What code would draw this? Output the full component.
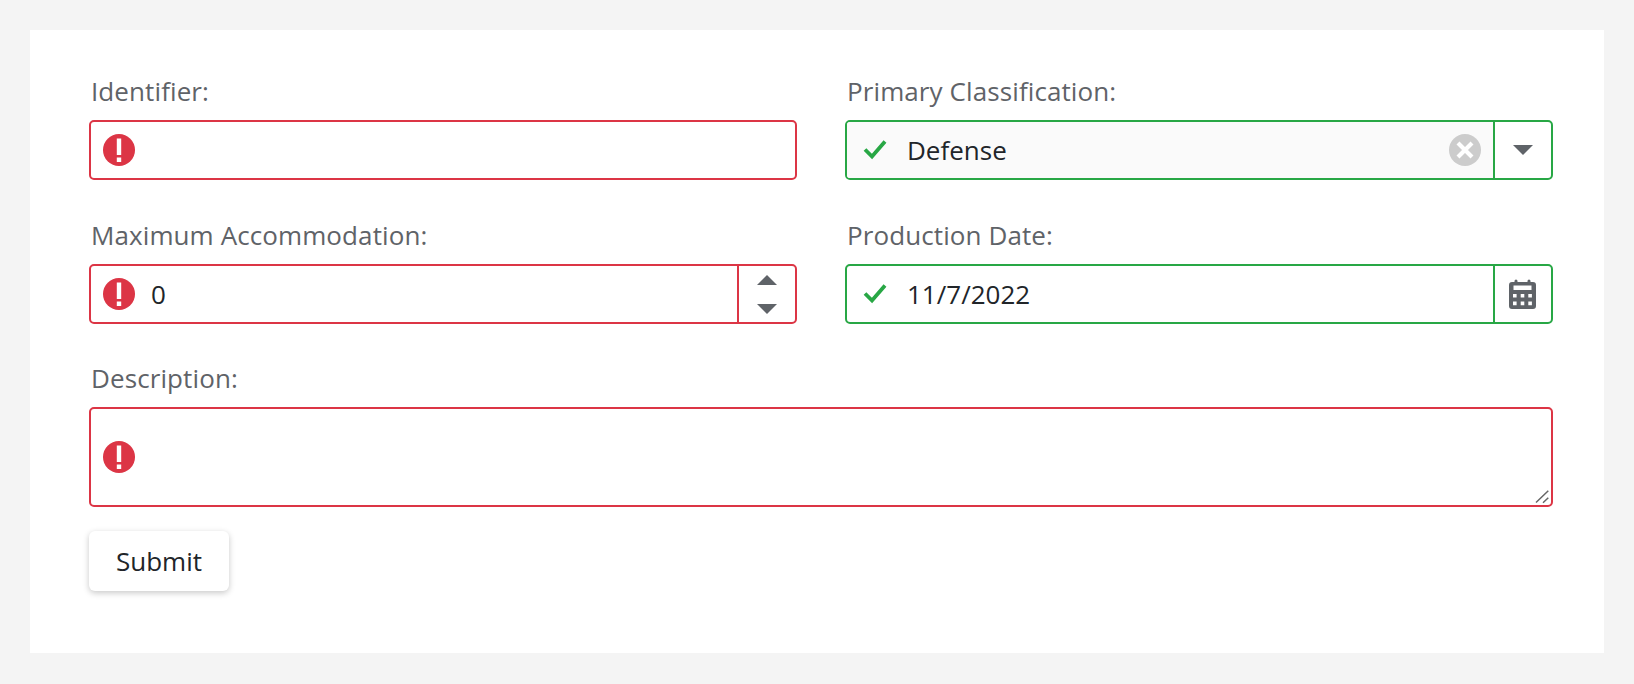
<div class="page">
  <form class="card">
    <div class="grid">
      <div class="field">
        <label for="id">Identifier:</label>
        <div class="box invalid">
          <svg class="err" viewBox="0 0 32 32"><circle cx="16" cy="16" r="16" fill="#dc3545"/><rect x="13.800" y="4.500" width="4.400" height="16.500" fill="#fff"/><rect x="13.800" y="23.500" width="4.400" height="4.500" fill="#fff"/></svg>
          <input id="id" class="text" />
        </div>
      </div>
      <div class="field">
        <label for="cls">Primary Classification:</label>
        <div class="box valid">
          <div class="main shaded">
            <svg class="ok" viewBox="0 0 24 24"><path d="M2 11.500l7 7L22 3.500" fill="none" stroke="#28a745" stroke-width="3.800"/></svg>
            <span class="value">Defense</span>
            <svg class="clear" viewBox="0 0 32 32"><circle cx="16" cy="16" r="16" fill="#ccc"/><path d="M9 9l14 14M23 9L9 23" stroke="#fff" stroke-width="4.200" fill="none"/></svg>
          </div>
          <div class="side">
            <svg class="tri" viewBox="0 0 20 10"><path d="M0 0h20L10 10z" fill="#5f6368"/></svg>
          </div>
        </div>
      </div>
      <div class="field">
        <label for="max">Maximum Accommodation:</label>
        <div class="box invalid">
          <div class="main">
            <svg class="err" viewBox="0 0 32 32"><circle cx="16" cy="16" r="16" fill="#dc3545"/><rect x="13.800" y="4.500" width="4.400" height="16.500" fill="#fff"/><rect x="13.800" y="23.500" width="4.400" height="4.500" fill="#fff"/></svg>
            <span class="value num">0</span>
          </div>
          <div class="side spin">
            <svg class="tri" viewBox="0 0 20 10"><path d="M0 10h20L10 0z" fill="#5f6368"/></svg>
            <svg class="tri" viewBox="0 0 20 10"><path d="M0 0h20L10 10z" fill="#5f6368"/></svg>
          </div>
        </div>
      </div>
      <div class="field">
        <label for="date">Production Date:</label>
        <div class="box valid">
          <div class="main">
            <svg class="ok" viewBox="0 0 24 24"><path d="M2 11.500l7 7L22 3.500" fill="none" stroke="#28a745" stroke-width="3.800"/></svg>
            <span class="value">11/7/2022</span>
          </div>
          <div class="side">
            <svg class="cal" viewBox="0 0 27 30"><path fill="#5f6368" fill-rule="evenodd" d="M3 3h2.500V2a1.500 1.500 0 0 1 3 0v1h10V2a1.500 1.500 0 0 1 3 0v1H24a3 3 0 0 1 3 3v21a3 3 0 0 1-3 3H3a3 3 0 0 1-3-3V6a3 3 0 0 1 3-3zM4.500 6.500v4.500h18v-4.500zM4 15v3.600h3.600v-3.600zM11.700 15v3.600h3.600v-3.600zM19.300 15v3.600h3.600v-3.600zM4 22.600v3.600h3.600v-3.600zM11.700 22.600v3.600h3.600v-3.600zM19.300 22.600v3.600h3.600v-3.600z"/></svg>
          </div>
        </div>
      </div>
      <div class="field wide">
        <label for="desc">Description:</label>
        <div class="box invalid area">
          <svg class="err" viewBox="0 0 32 32"><circle cx="16" cy="16" r="16" fill="#dc3545"/><rect x="13.800" y="4.500" width="4.400" height="16.500" fill="#fff"/><rect x="13.800" y="23.500" width="4.400" height="4.500" fill="#fff"/></svg>
          <svg class="grip" viewBox="0 0 16 16"><path d="M1 13.500L13.300 1.700M8 13.700l5.300-5" stroke="#666" stroke-width="1.500" fill="none"/></svg>
        </div>
      </div>
    </div>
    <button type="button" class="submit">Submit</button>
  </form>
</div>

<style>
  :global(body) { margin: 0; background: #f4f4f4; }
  .page { padding: 30px; height: 624px; font-family: "Open Sans", "Noto Sans", sans-serif; }
  .card { background: #fff; height: 623px; box-sizing: border-box; padding: 42px 52px 0 59px; }
  .grid { display: grid; grid-template-columns: 708px 708px; column-gap: 48px; row-gap: 36px; }
  .wide { grid-column: 1 / 3; }
  label { display: block; font-size: 26px; line-height: 39px; color: #5f6368; margin: 0 0 9px 2px; letter-spacing: 0.1px; }
  .wide label { margin-top: -1px; }
  .box { display: flex; align-items: center; height: 60px; box-sizing: border-box; border: 2px solid; border-radius: 5px; position: relative; overflow: hidden; }
  .invalid { border-color: #dc3545; }
  .valid { border-color: #28a745; }
  .main { flex: 1; display: flex; align-items: center; height: 100%; min-width: 0; }
  .shaded { background: #fafafa; }
  .text { flex: 1; border: 0; outline: 0; background: none; }
  .err { width: 32px; height: 32px; margin-left: 12px; flex: none; }
  .ok { width: 24px; height: 24px; margin-left: 16px; flex: none; }
  .value { font-size: 26px; color: #212529; margin-left: 20px; }
  .num { margin-left: 16px; }
  .clear { width: 32px; height: 32px; margin-left: auto; margin-right: 12px; flex: none; }
  .side { width: 58px; height: 100%; box-sizing: border-box; display: flex; flex-direction: column; align-items: center; justify-content: center; flex: none; }
  .valid .side { border-left: 2px solid #28a745; }
  .invalid .side { border-left: 2px solid #dc3545; }
  .spin { gap: 19px; }
  .tri { width: 20px; height: 10px; display: block; }
  .cal { width: 27px; height: 30px; margin-right: 1px; }
  .area { height: 100px; }
  .grip { position: absolute; right: 0; bottom: 0; width: 16px; height: 16px; }
  .submit { margin: 24px 0 0 0; width: 140px; height: 60px; border: 0; border-radius: 6px; background: #fff; box-shadow: 0 2px 6px rgba(0,0,0,.22); font: 26px "Open Sans", "Noto Sans", sans-serif; color: #212529; padding: 0; }
</style>
